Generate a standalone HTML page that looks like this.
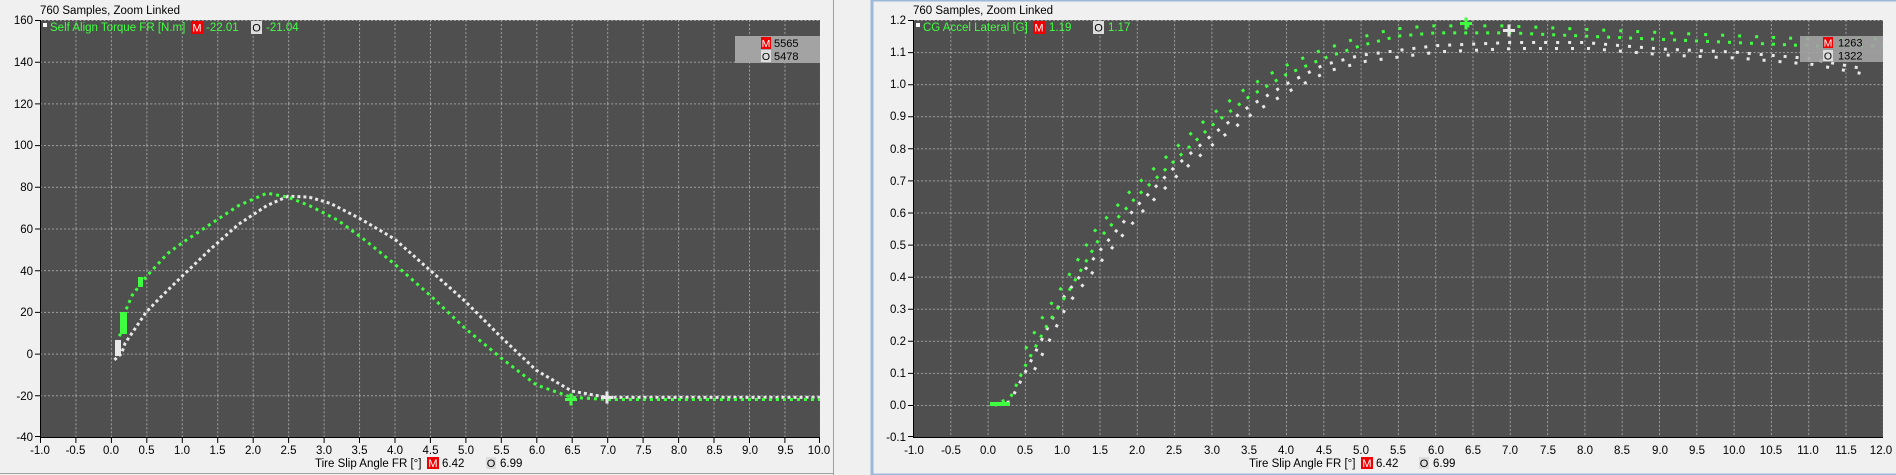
<!DOCTYPE html>
<html><head><meta charset="utf-8"><style>
html,body{margin:0;padding:0;background:#f0f0f0;width:1896px;height:475px;overflow:hidden}
svg{display:block;font-family:"Liberation Sans",sans-serif}
</style></head><body>
<svg width="1896" height="475" viewBox="0 0 1896 475" xmlns="http://www.w3.org/2000/svg">
<defs>
<pattern id="gl" x="40" y="20" width="35.45" height="41.7" patternUnits="userSpaceOnUse">
<path d="M0.5 0V41.7M0 0.5H35.45" stroke="#a0a0a0" stroke-width="1" stroke-dasharray="2 2" fill="none"/>
</pattern>
<pattern id="gr" x="913" y="20" width="37.3" height="32.08" patternUnits="userSpaceOnUse">
<path d="M0.5 0V32.08M0 0.5H37.3" stroke="#a0a0a0" stroke-width="1" stroke-dasharray="2 2" fill="none"/>
</pattern>
</defs>
<!-- left panel -->
<line x1="833.5" y1="0" x2="833.5" y2="475" stroke="#a0a0a0"/>
<line x1="0" y1="473.5" x2="834" y2="473.5" stroke="#a0a0a0"/>
<text x="40" y="14" font-size="11.5" fill="#000">760 Samples, Zoom Linked</text>
<rect x="40" y="20" width="780" height="417" fill="#4f4f4f"/>
<rect x="40" y="20" width="780" height="417" fill="url(#gl)"/>
<line x1="40.5" y1="20" x2="40.5" y2="438" stroke="#000"/>
<line x1="40" y1="437.5" x2="820" y2="437.5" stroke="#000"/>
<g stroke="#000">
<path d="M35 20.5H40M35 62.2H40M35 103.9H40M35 145.6H40M35 187.3H40M35 229H40M35 270.7H40M35 312.4H40M35 354.1H40M35 395.8H40M35 436.5H40"/>
<path d="M40.5 437V443M75.9 437V443M111.4 437V443M146.8 437V443M182.3 437V443M217.7 437V443M253.2 437V443M288.6 437V443M324.1 437V443M359.5 437V443M395 437V443M430.4 437V443M465.9 437V443M501.3 437V443M536.8 437V443M572.2 437V443M607.7 437V443M643.1 437V443M678.6 437V443M714 437V443M749.5 437V443M784.9 437V443M819.5 437V443"/>
</g>
<g font-size="11.5" fill="#000" text-anchor="end">
<text x="33" y="24">160</text><text x="33" y="66">140</text><text x="33" y="108">120</text><text x="33" y="149">100</text><text x="33" y="191">80</text><text x="33" y="233">60</text><text x="33" y="275">40</text><text x="33" y="316">20</text><text x="33" y="358">0</text><text x="33" y="400">-20</text><text x="33" y="441">-40</text>
</g>
<g font-size="11.5" fill="#000" text-anchor="middle">
<text x="40" y="454">-1.0</text><text x="75.5" y="454">-0.5</text><text x="111" y="454">0.0</text><text x="146.5" y="454">0.5</text><text x="182" y="454">1.0</text><text x="217.5" y="454">1.5</text><text x="253" y="454">2.0</text><text x="288.5" y="454">2.5</text><text x="324" y="454">3.0</text><text x="359.5" y="454">3.5</text><text x="395" y="454">4.0</text><text x="430.5" y="454">4.5</text><text x="466" y="454">5.0</text><text x="501.5" y="454">5.5</text><text x="537" y="454">6.0</text><text x="572.5" y="454">6.5</text><text x="608" y="454">7.0</text><text x="643.5" y="454">7.5</text><text x="679" y="454">8.0</text><text x="714.5" y="454">8.5</text><text x="750" y="454">9.0</text><text x="785.5" y="454">9.5</text><text x="819" y="454">10.0</text>
</g>
<text x="315" y="467" font-size="11.5" fill="#000">Tire Slip Angle FR [°]</text>
<rect x="427" y="457" width="12" height="12" fill="#e00"/><text x="433" y="467" font-size="11" fill="#fff" text-anchor="middle">M</text>
<text x="442" y="467" font-size="11.5" fill="#000">6.42</text>
<rect x="486" y="457" width="10" height="12" fill="#ddd"/><text x="491" y="467" font-size="11" fill="#000" text-anchor="middle">O</text>
<text x="500" y="467" font-size="11.5" fill="#000">6.99</text>
<rect x="43" y="23" width="4" height="4" fill="#fff"/>
<text x="50" y="31" font-size="11.5" fill="#40ff40">Self Align Torque FR [N.m]</text>
<rect x="191" y="21" width="12" height="13" fill="#e00"/><text x="197" y="31.5" font-size="11" fill="#fff" text-anchor="middle">M</text>
<text x="206" y="31" font-size="11.5" fill="#40ff40">-22.01</text>
<rect x="251" y="21" width="11" height="13" fill="#ddd"/><text x="256.5" y="31.5" font-size="11" fill="#000" text-anchor="middle">O</text>
<text x="266" y="31" font-size="11.5" fill="#40ff40">-21.04</text>
<rect x="735" y="36" width="85" height="27" fill="#a3a3a3"/>
<rect x="761" y="37" width="10" height="12" fill="#e00"/><text x="766" y="47" font-size="10.5" fill="#fff" text-anchor="middle">M</text>
<text x="774" y="47" font-size="11" fill="#000">5565</text>
<rect x="761" y="50" width="10" height="12" fill="#ddd"/><text x="766" y="60" font-size="10.5" fill="#000" text-anchor="middle">O</text>
<text x="774" y="60" font-size="11" fill="#000">5478</text>
<g fill="none">
<polyline stroke="#e8e8e8" stroke-width="3" stroke-dasharray="3 3" points="114.4,359.9 121.5,353.6 125.1,343.2 132.2,332.8 146.4,311.9 160.5,297.3 181.8,276.5 210.2,249.4 238.5,224.3 266.9,205.6 288.2,196.2 309.4,197.2 330.7,203.5 359.1,218.1 394.5,238.9 430,270.2 465.4,301.5 500.9,336.9 536.3,370.3 571.8,391.1 607.2,397.4 820,397.4"/>
<polyline stroke="#40ff40" stroke-width="3" stroke-dasharray="3 4" points="118,343.2 121.5,328.6 125.1,311.9 132.2,295.2 146.4,276.5 167.6,253.5 181.8,243.1 210.2,224.3 238.5,205.6 266.9,193.1 288.2,197.2 309.4,205.6 337.8,220.2 366.1,241 394.5,264 430,295.2 465.4,328.6 500.9,357.8 536.3,384.9 571.8,397.4 607.2,399.5 820,399.5"/>
</g>
<g fill="#40ff40"><rect x="120" y="312" width="7" height="22"/><rect x="138" y="277" width="5" height="10"/></g>
<rect x="115" y="340" width="6" height="16" fill="#e8e8e8"/>
<g stroke-width="3"><path d="M565 399.5h12M571 393.5v12" stroke="#40ff40"/><path d="M601 397.5h12M607 391.5v12" stroke="#e8e8e8"/></g>
<!-- right panel -->
<rect x="872" y="0" width="1030" height="475" fill="none" stroke="#9db9d9" stroke-width="3"/>
<rect x="874" y="2" width="1022" height="471" fill="#f0f0f0"/>
<text x="913" y="14" font-size="11.5" fill="#000">760 Samples, Zoom Linked</text>
<rect x="913" y="20" width="970" height="417" fill="#4f4f4f"/>
<rect x="913" y="20" width="970" height="417" fill="url(#gr)"/>
<line x1="913.5" y1="20" x2="913.5" y2="438" stroke="#000"/>
<line x1="913" y1="437.5" x2="1883" y2="437.5" stroke="#000"/>
<g stroke="#000">
<path d="M908 20.5H913M908 52.6H913M908 84.7H913M908 116.7H913M908 148.8H913M908 180.9H913M908 213H913M908 245.1H913M908 277.2H913M908 309.2H913M908 341.3H913M908 373.4H913M908 405.5H913M908 436.5H913"/>
</g>
<g font-size="11.5" fill="#000" text-anchor="end">
<text x="906" y="24">1.2</text><text x="906" y="56">1.1</text><text x="906" y="88">1.0</text><text x="906" y="120">0.9</text><text x="906" y="153">0.8</text><text x="906" y="185">0.7</text><text x="906" y="217">0.6</text><text x="906" y="249">0.5</text><text x="906" y="281">0.4</text><text x="906" y="313">0.3</text><text x="906" y="345">0.2</text><text x="906" y="377">0.1</text><text x="906" y="409">0.0</text><text x="906" y="441">-0.1</text>
</g>
<g font-size="11.5" fill="#000" text-anchor="middle">
<text x="914" y="454">-1.0</text><text x="951" y="454">-0.5</text><text x="988" y="454">0.0</text><text x="1025" y="454">0.5</text><text x="1062" y="454">1.0</text><text x="1100" y="454">1.5</text><text x="1137" y="454">2.0</text><text x="1174" y="454">2.5</text><text x="1212" y="454">3.0</text><text x="1249" y="454">3.5</text><text x="1286" y="454">4.0</text><text x="1324" y="454">4.5</text><text x="1361" y="454">5.0</text><text x="1398" y="454">5.5</text><text x="1436" y="454">6.0</text><text x="1473" y="454">6.5</text><text x="1510" y="454">7.0</text><text x="1548" y="454">7.5</text><text x="1585" y="454">8.0</text><text x="1622" y="454">8.5</text><text x="1660" y="454">9.0</text><text x="1697" y="454">9.5</text><text x="1734" y="454">10.0</text><text x="1771" y="454">10.5</text><text x="1808" y="454">11.0</text><text x="1846" y="454">11.5</text><text x="1881" y="454">12.0</text>
</g>
<text x="1249" y="467" font-size="11.5" fill="#000">Tire Slip Angle FR [°]</text>
<rect x="1361" y="457" width="12" height="12" fill="#e00"/><text x="1367" y="467" font-size="11" fill="#fff" text-anchor="middle">M</text>
<text x="1376" y="467" font-size="11.5" fill="#000">6.42</text>
<rect x="1419" y="457" width="10" height="12" fill="#ddd"/><text x="1424" y="467" font-size="11" fill="#000" text-anchor="middle">O</text>
<text x="1433" y="467" font-size="11.5" fill="#000">6.99</text>
<rect x="916" y="23" width="4" height="4" fill="#fff"/>
<text x="923" y="31" font-size="11.5" fill="#40ff40">CG Accel Lateral [G]</text>
<rect x="1033" y="21" width="12" height="13" fill="#e00"/><text x="1039" y="31.5" font-size="11" fill="#fff" text-anchor="middle">M</text>
<text x="1049" y="31" font-size="11.5" fill="#40ff40">1.19</text>
<rect x="1093" y="21" width="11" height="13" fill="#ddd"/><text x="1098.5" y="31.5" font-size="11" fill="#000" text-anchor="middle">O</text>
<text x="1108" y="31" font-size="11.5" fill="#40ff40">1.17</text>
<g fill="none" stroke-width="3">
<polyline stroke="#e8e8e8" stroke-dasharray="3 9" points="995,405 1010,401.8 1024.9,372.9 1062.2,299.1 1099.5,251 1136.8,206.1 1174.1,167.6 1211.4,135.5 1248.7,106.7 1286,84.2 1323.3,65 1360.6,55.3 1435.2,45.7 1509.8,42.5 1584.4,42.5 1659,48.9 1733.6,52.1 1808.2,58.5 1860.4,68.2"/>
<polyline stroke="#e8e8e8" stroke-dasharray="3 13" stroke-dashoffset="6" transform="translate(5,6)" points="1024.9,372.9 1062.2,299.1 1099.5,251 1136.8,206.1 1174.1,167.6 1211.4,135.5 1248.7,106.7 1286,84.2 1323.3,65 1360.6,55.3 1435.2,45.7 1509.8,42.5 1584.4,42.5 1659,48.9 1733.6,52.1 1808.2,58.5 1860.4,68.2"/>
<polyline stroke="#40ff40" stroke-dasharray="3 8" points="991.3,405 1010,398.6 1024.9,366.5 1047.3,324.8 1069.7,289.5 1099.5,238.2 1136.8,196.5 1174.1,161.2 1211.4,125.9 1248.7,97 1286,74.6 1323.3,58.5 1360.6,45.7 1397.9,36.1 1435.2,32.9 1509.8,32.9 1584.4,36.1 1659,39.3 1733.6,42.5 1808.2,45.7 1882.8,45.7"/>
<polyline stroke="#40ff40" stroke-dasharray="3 14" stroke-dashoffset="5" transform="translate(-5,-7)" points="1024.9,366.5 1047.3,324.8 1069.7,289.5 1099.5,238.2 1136.8,196.5 1174.1,161.2 1211.4,125.9 1248.7,97 1286,74.6 1323.3,58.5 1360.6,45.7 1397.9,36.1 1435.2,32.9 1509.8,32.9 1584.4,36.1 1659,39.3 1733.6,42.5 1808.2,45.7 1882.8,45.7"/>
</g>
<rect x="990" y="402" width="20" height="4" fill="#40ff40"/>
<rect x="1800" y="36" width="83" height="26" fill="#a3a3a3" opacity="0.9"/>
<rect x="1823" y="37" width="10" height="11" fill="#e00"/><text x="1828" y="46.5" font-size="10.5" fill="#fff" text-anchor="middle">M</text>
<text x="1838" y="46.5" font-size="11" fill="#000">1263</text>
<rect x="1823" y="50" width="10" height="11" fill="#ddd"/><text x="1828" y="59.5" font-size="10.5" fill="#000" text-anchor="middle">O</text>
<text x="1838" y="59.5" font-size="11" fill="#000">1322</text>
<g stroke-width="3"><path d="M1460 23.5h12M1466 17.5v12" stroke="#40ff40"/><path d="M1503 30.5h12M1509 24.5v12" stroke="#e8e8e8"/></g>
</svg>
</body></html>
